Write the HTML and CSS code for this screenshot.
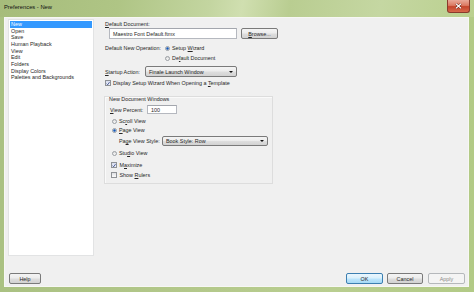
FILE: index.html
```html
<!DOCTYPE html>
<html lang="en">
<head>
    <meta charset="UTF-8">
    <title>Preferences - New</title>
    <link rel="stylesheet" href="styles.css">
</head>
<body>
    <div class="window">
        <div class="titlebar">
            <span class="title">Preferences - New</span>
            <span class="close">
                <svg width="7" height="6" viewBox="0 0 7 6">
                    <path d="M1 0.8 L6 5.2 M6 0.8 L1 5.2" stroke="#6b1d10" stroke-width="2.2" />
                    <path d="M1 0.8 L6 5.2 M6 0.8 L1 5.2" stroke="#ffffff" stroke-width="1.2" />
                </svg>
            </span>
        </div>
        <div class="client">
            <div class="main">
                <ul class="pages">
                    <li class="selected">New</li>
                    <li>Open</li>
                    <li>Save</li>
                    <li>Human Playback</li>
                    <li>View</li>
                    <li>Edit</li>
                    <li>Folders</li>
                    <li>Display Colors</li>
                    <li>Palettes and Backgrounds</li>
                </ul>
                <div class="panel">
                    <div class="label doc-label"><u>D</u>efault Document:</div>
                    <div class="doc-row">
                        <div class="textbox doc-box">Maestro Font Default.ftmx</div>
                        <button class="btn browse"><u>B</u>rowse...</button>
                    </div>
                    <div class="op-row">
                        <div class="label op-label">Default New Operation:</div>
                        <div class="radios">
                            <div class="radio-item"><span class="radio checked"></span><span>Setup <u>W</u>izard</span></div>
                            <div class="radio-item"><span class="radio"></span><span>De<u>f</u>ault Document</span></div>
                        </div>
                    </div>
                    <div class="startup-row">
                        <div class="label startup-label"><u>S</u>tartup Action:</div>
                        <div class="combo startup-combo">Finale Launch Window</div>
                    </div>
                    <div class="check-item wizard-check"><span class="checkbox checked"><svg width="5" height="5" viewBox="0 0 8 8"><path d="M1.2 4.2 L3.2 6.6 L7 1.4" stroke="#34488a" stroke-width="1.7" fill="none" /></svg></span><span>Display Setup Wizard When Opening a <u>T</u>emplate</span></div>

                    <div class="group">
                        <div class="group-title">New Document Windows</div>
                        <div class="percent-row">
                            <div class="label percent-label"><u>V</u>iew Percent:</div>
                            <div class="textbox percent-box">100</div>
                        </div>
                        <div class="radio-item view-item first"><span class="radio"></span><span>Sc<u>r</u>oll View</span></div>
                        <div class="radio-item view-item"><span class="radio checked"></span><span><u>P</u>age View</span></div>
                        <div class="style-row">
                            <div class="label style-label">Pa<u>g</u>e View Style:</div>
                            <div class="combo style-combo">Book Style: Row</div>
                        </div>
                        <div class="radio-item view-item studio"><span class="radio"></span><span>Stu<u>d</u>io View</span></div>
                        <div class="check-item group-check first"><span class="checkbox checked"><svg width="5" height="5" viewBox="0 0 8 8"><path d="M1.2 4.2 L3.2 6.6 L7 1.4" stroke="#34488a" stroke-width="1.7" fill="none" /></svg></span><span>M<u>a</u>ximize</span></div>
                        <div class="check-item group-check"><span class="checkbox"></span><span>Show <u>R</u>ulers</span></div>
                    </div>
                </div>
            </div>
            <div class="footer">
                <button class="btn help">Help</button>
                <div class="spacer"></div>
                <button class="btn ok">OK</button>
                <button class="btn cancel">Cancel</button>
                <button class="btn apply" disabled>Apply</button>
            </div>
        </div>
    </div>
</body>
</html>
```

FILE: styles.css
```css
* {
    box-sizing: border-box;
}

body {
    margin: 0;
    font-family: "Liberation Sans", Arial, sans-serif;
    font-size: 5.4px;
    color: #262626;
}

u {
    text-decoration-thickness: 0.5px;
    text-underline-offset: 0.6px;
}

.window {
    width: 474px;
    height: 292px;
    display: flex;
    flex-direction: column;
    background: linear-gradient(90deg, #aac182 0%, #b3c88a 40%, #b9ce90 70%, #b2ca86 100%);
}

.titlebar {
    height: 17px;
    display: flex;
    justify-content: space-between;
    align-items: flex-start;
    padding: 0 4px;
    background: linear-gradient(100deg, #a6bc7b 0%, #afc585 25%, #c3d5a0 44%, #d0dfb0 51%, #b9cd91 61%, #c5d7a2 80%, #bad08f 100%);
}

.title {
    font-size: 5.8px;
    line-height: 6px;
    margin-top: 4px;
    color: #111;
}

.close {
    width: 23px;
    height: 13px;
    display: flex;
    align-items: center;
    justify-content: center;
    border: 1px solid #8a3a2c;
    border-top: none;
    border-radius: 0 0 3px 3px;
    background: linear-gradient(#e9a999 0%, #dc7a63 45%, #c5452c 55%, #d6684c 100%);
}

.client {
    flex: 1;
    margin: 0 5px 5px 4px;
    display: flex;
    flex-direction: column;
    background: #f0f0f0;
    box-shadow: inset 0 0 0 1px #f7f7f4;
}

.main {
    flex: 1;
    display: flex;
    padding: 2px 0 0 4px;
}

.pages {
    list-style: none;
    margin: 0;
    padding: 1px;
    width: 86px;
    height: 237px;
    background: #fff;
    border: 1px solid #e2e3e4;
}

.pages li {
    height: 6.67px;
    line-height: 6.67px;
    padding-left: 1px;
    white-space: nowrap;
}

.pages li.selected {
    background: #3399ff;
    color: #fff;
}

.panel {
    margin-left: 10px;
    display: flex;
    flex-direction: column;
}

.label {
    line-height: 6px;
    white-space: nowrap;
}

.doc-label {
    margin: 2px 0 0 1px;
    height: 6px;
}

.doc-row {
    display: flex;
    margin-top: 1px;
    height: 11px;
    padding-left: 5px;
}

.textbox {
    background: #fff;
    border: 1px solid #b5b8bf;
    border-top-color: #a3a6ad;
    padding-left: 3px;
    display: flex;
    align-items: center;
    white-space: nowrap;
}

.doc-box {
    width: 128px;
}

.btn {
    font-family: inherit;
    font-size: 5.4px;
    color: #262626;
    padding: 0;
    height: 11px;
    border: 1px solid #7a7a7a;
    border-radius: 2px;
    background: linear-gradient(#f4f4f4 0%, #ececec 48%, #dedede 52%, #d2d2d2 100%);
}

.browse {
    width: 37px;
    margin-left: 4px;
}

.op-row {
    display: flex;
    margin-top: 4px;
}

.op-label {
    width: 61px;
    padding-left: 1px;
    margin-top: 2px;
}

.radio-item,
.check-item {
    display: flex;
    align-items: center;
    white-space: nowrap;
}

.radios .radio-item {
    height: 10px;
}

.radio {
    width: 5px;
    height: 5px;
    margin-right: 2px;
    border-radius: 50%;
    border: 1px solid #9a9ea3;
    background: linear-gradient(#dcdcdc, #fafafa);
}

.radio.checked {
    background: radial-gradient(circle, #1f57a8 0%, #3e7ad0 45%, #c9d9ee 75%, #eef2f7 100%);
}

.startup-row {
    display: flex;
    align-items: center;
    margin-top: 3px;
    height: 11px;
}

.startup-label {
    width: 41px;
    padding-left: 1px;
}

.combo {
    position: relative;
    height: 100%;
    display: flex;
    align-items: center;
    padding-left: 3px;
    border: 1px solid #7a7a7a;
    border-radius: 2px;
    background: linear-gradient(#f4f4f4 0%, #ececec 48%, #dedede 52%, #d2d2d2 100%);
    white-space: nowrap;
}

.combo::after {
    content: "";
    position: absolute;
    right: 3px;
    top: 50%;
    margin-top: -1px;
    border-left: 2px solid transparent;
    border-right: 2px solid transparent;
    border-top: 2px solid #111;
}

.startup-combo {
    width: 92px;
}

.wizard-check {
    margin-top: 1px;
    height: 10px;
    padding-left: 1px;
}

.checkbox {
    width: 6px;
    height: 6px;
    margin-right: 2px;
    border: 1px solid #8f9296;
    background: linear-gradient(#dfe1e4, #fbfbfb);
    display: flex;
    align-items: center;
    justify-content: center;
}

.checkbox.checked {
    background: linear-gradient(#d6dcef, #f4f6fb);
}

.group {
    margin-top: 8px;
    width: 169px;
    height: 88px;
    border: 1px solid #dddddd;
    box-shadow: inset 1px 1px 0 #fafafa;
}

.group-title {
    height: 6px;
    line-height: 6px;
    margin-left: 4px;
    margin-top: -1px;
}

.percent-row {
    display: flex;
    align-items: center;
    margin-top: 3px;
    height: 9px;
    padding-left: 5px;
}

.percent-label {
    width: 37px;
}

.percent-box {
    width: 30px;
    height: 9px;
}

.view-item {
    height: 9px;
    padding-left: 7px;
}

.view-item.first {
    margin-top: 2.5px;
}

.style-row {
    display: flex;
    align-items: center;
    margin-top: 1.5px;
    height: 10px;
    padding-left: 14px;
}

.style-label {
    width: 43px;
}

.style-combo {
    width: 106px;
}

.view-item.studio {
    margin-top: 2.5px;
}

.group-check {
    height: 10px;
    padding-left: 6px;
}

.group-check.first {
    margin-top: 2.5px;
}

.group-check .checkbox {
    margin-right: 2.5px;
}

.footer {
    display: flex;
    align-items: center;
    height: 11px;
    margin-bottom: 3px;
    padding: 0 4px 0 5px;
}

.spacer {
    flex: 1;
}

.help {
    width: 32px;
}

.ok {
    width: 37px;
    border-color: #3c7fb1;
    background: linear-gradient(#eaf6fd 0%, #d9f0fc 48%, #bee6fd 52%, #a7d9f5 100%);
}

.cancel {
    width: 36px;
    margin-left: 4px;
}

.apply {
    width: 37px;
    margin-left: 5px;
    color: #8a8a8a;
    border-color: #b5b8bb;
    background: #f4f4f4;
}
```
